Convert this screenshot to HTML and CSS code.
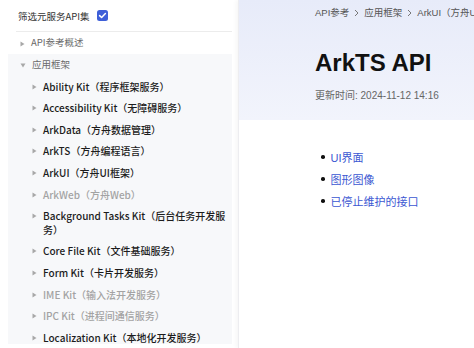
FILE: index.html
```html
<!DOCTYPE html>
<html lang="zh-CN">
<head>
<meta charset="utf-8">
<title>ArkTS API</title>
<link rel="stylesheet" href="styles.css">
</head>
<body>
<div class="page">
  <aside class="sidebar">
    <div class="filter">
      <span class="filter-label">筛选元服务API集</span>
      <span class="checkbox"><svg width="11" height="11" viewBox="0 0 11 11"><path d="M2.6 5.6 L4.6 7.5 L8.4 3.6" fill="none" stroke="#fff" stroke-width="1.5" stroke-linecap="round" stroke-linejoin="round"/></svg></span>
    </div>
    <div class="divider"></div>
    <div class="row top">
      <svg class="caret" width="5" height="6" viewBox="0 0 5 6"><path d="M0.5 0.5 L4.5 3 L0.5 5.5 Z"/></svg>
      <span>API参考概述</span>
    </div>
    <div class="group">
      <div class="row top">
        <svg class="caret" width="6" height="5" viewBox="0 0 6 5"><path d="M0.5 0.5 L5.5 0.5 L3 4.5 Z"/></svg>
        <span>应用框架</span>
      </div>
      <div class="row kit"><svg class="caret" width="5" height="6" viewBox="0 0 5 6"><path d="M0.5 0.5 L4.5 3 L0.5 5.5 Z"/></svg><span>Ability Kit（程序框架服务）</span></div>
      <div class="row kit"><svg class="caret" width="5" height="6" viewBox="0 0 5 6"><path d="M0.5 0.5 L4.5 3 L0.5 5.5 Z"/></svg><span>Accessibility Kit（无障碍服务）</span></div>
      <div class="row kit"><svg class="caret" width="5" height="6" viewBox="0 0 5 6"><path d="M0.5 0.5 L4.5 3 L0.5 5.5 Z"/></svg><span>ArkData（方舟数据管理）</span></div>
      <div class="row kit"><svg class="caret" width="5" height="6" viewBox="0 0 5 6"><path d="M0.5 0.5 L4.5 3 L0.5 5.5 Z"/></svg><span>ArkTS（方舟编程语言）</span></div>
      <div class="row kit"><svg class="caret" width="5" height="6" viewBox="0 0 5 6"><path d="M0.5 0.5 L4.5 3 L0.5 5.5 Z"/></svg><span>ArkUI（方舟UI框架）</span></div>
      <div class="row kit disabled"><svg class="caret" width="5" height="6" viewBox="0 0 5 6"><path d="M0.5 0.5 L4.5 3 L0.5 5.5 Z"/></svg><span>ArkWeb（方舟Web）</span></div>
      <div class="row kit"><svg class="caret" width="5" height="6" viewBox="0 0 5 6"><path d="M0.5 0.5 L4.5 3 L0.5 5.5 Z"/></svg><span>Background Tasks Kit（后台任务开发服务）</span></div>
      <div class="row kit"><svg class="caret" width="5" height="6" viewBox="0 0 5 6"><path d="M0.5 0.5 L4.5 3 L0.5 5.5 Z"/></svg><span>Core File Kit（文件基础服务）</span></div>
      <div class="row kit"><svg class="caret" width="5" height="6" viewBox="0 0 5 6"><path d="M0.5 0.5 L4.5 3 L0.5 5.5 Z"/></svg><span>Form Kit（卡片开发服务）</span></div>
      <div class="row kit disabled"><svg class="caret" width="5" height="6" viewBox="0 0 5 6"><path d="M0.5 0.5 L4.5 3 L0.5 5.5 Z"/></svg><span>IME Kit（输入法开发服务）</span></div>
      <div class="row kit disabled"><svg class="caret" width="5" height="6" viewBox="0 0 5 6"><path d="M0.5 0.5 L4.5 3 L0.5 5.5 Z"/></svg><span>IPC Kit（进程间通信服务）</span></div>
      <div class="row kit"><svg class="caret" width="5" height="6" viewBox="0 0 5 6"><path d="M0.5 0.5 L4.5 3 L0.5 5.5 Z"/></svg><span>Localization Kit（本地化开发服务）</span></div>
    </div>
  </aside>
  <main class="main">
    <header class="hero">
      <div class="crumbs">
        <span>API参考</span>
        <svg class="chev" width="5" height="8" viewBox="0 0 5 8"><path d="M1 1 L4 4 L1 7" fill="none" stroke="#777" stroke-width="1"/></svg>
        <span>应用框架</span>
        <svg class="chev" width="5" height="8" viewBox="0 0 5 8"><path d="M1 1 L4 4 L1 7" fill="none" stroke="#777" stroke-width="1"/></svg>
        <span>ArkUI（方舟UI框架）</span>
      </div>
      <h1 class="title">ArkTS API</h1>
      <div class="updated">更新时间: 2024-11-12 14:16</div>
    </header>
    <ul class="links">
      <li><span class="dot"></span><a href="#">UI界面</a></li>
      <li><span class="dot"></span><a href="#">图形图像</a></li>
      <li><span class="dot"></span><a href="#">已停止维护的接口</a></li>
    </ul>
  </main>
</div>
</body>
</html>
```

FILE: styles.css
```css
* { box-sizing: border-box; }
html, body { margin: 0; padding: 0; background: #fff; }
body { width: 474px; height: 348px; overflow: hidden; }

.page {
  display: flex;
  height: 348px;
}

.sidebar {
  width: 238px;
  flex: none;
  display: flex;
  flex-direction: column;
  padding-bottom: 4px;
  font-family: "Noto Sans CJK SC", "Liberation Sans", sans-serif;
  background: #fff;
}

.filter {
  height: 31px;
  display: flex;
  align-items: center;
  padding-left: 18px;
  gap: 7px;
  font-size: 9.5px;
  color: #333;
}
.checkbox {
  width: 11px;
  height: 11px;
  border-radius: 2.5px;
  background: #3e5fd8;
  display: flex;
}

.divider {
  height: 1px;
  background: #ececec;
  margin: 0 6px 0 16px;
}

.row {
  display: flex;
  align-items: flex-start;
  padding: 4px 0;
  line-height: 13.6px;
  font-size: 10px;
}
.caret {
  flex: none;
  fill: #a8a8a8;
  margin-top: 4px;
}
.row.top {
  padding-left: 20px;
  gap: 6px;
  color: #6a6a6a;
  font-size: 9.5px;
}
.row.top .caret { margin-top: 4.5px; }

.group {
  flex: 1;
  overflow: hidden;
  margin: 0 6px 0 8px;
  background: #f7f8fa;
  padding-top: 0.5px;
}
.group .row.top { padding-left: 12px; }

.row.kit {
  padding-left: 24px;
  padding-right: 2px;
  gap: 6px;
  color: #1c1c1c;
  font-weight: 500;
}
.row.kit.disabled { color: #a3a3a3; }

.main {
  flex: 1;
  min-width: 0;
  border-left: 1px solid #ededf0;
  box-shadow: -2px 0 4px rgba(0, 0, 0, 0.04);
  font-family: "Liberation Sans", "Noto Sans CJK SC", sans-serif;
  overflow: hidden;
}

.hero {
  height: 120px;
  padding: 6px 0 0 76px;
  background: linear-gradient(180deg, #e7ebf9 0%, #f2f4fc 100%);
  display: flex;
  flex-direction: column;
}
.crumbs {
  display: flex;
  align-items: center;
  gap: 5px;
  white-space: nowrap;
  font-size: 9.5px;
  line-height: 14px;
  color: #555;
}
.chev { flex: none; }

.title {
  margin: 28px 0 0;
  font-size: 24px;
  line-height: 30px;
  font-weight: 700;
  color: #111;
}
.updated {
  margin-top: 11px;
  font-size: 10px;
  line-height: 14px;
  color: #666;
}

.links {
  list-style: none;
  margin: 0;
  padding: 26px 0 0 82px;
}
.links li {
  display: flex;
  align-items: center;
  gap: 6px;
  height: 22px;
  font-size: 11px;
}
.dot {
  width: 3.5px;
  height: 3.5px;
  border-radius: 50%;
  background: #111;
  flex: none;
}
.links a {
  color: #3b57d2;
  text-decoration: none;
}
```
